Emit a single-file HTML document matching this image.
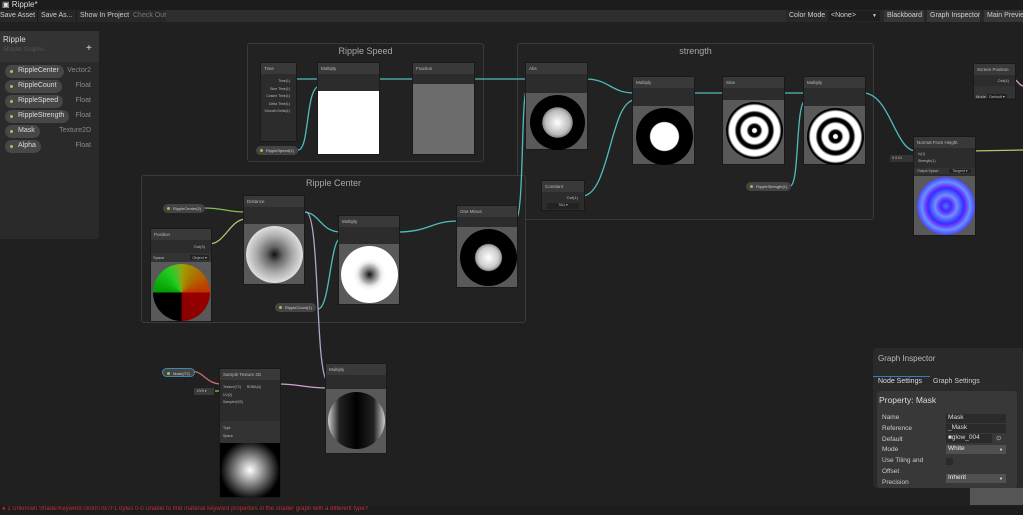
<!DOCTYPE html>
<html><head><meta charset="utf-8"><style>
*{margin:0;padding:0;box-sizing:border-box}
body{width:1023px;height:515px;background:#202020;position:relative;overflow:hidden;font-family:"Liberation Sans",sans-serif;color:#c4c4c4}
.a{position:absolute;white-space:nowrap}
.grp{position:absolute;border:1px solid #3a3a3a;border-radius:3px;background:#222}
.gt{position:absolute;left:0;right:0;top:2px;text-align:center;font-size:9px;color:#a8a8a8}
.n{position:absolute;background:#2c2c2c;border:1px solid #1a1a1a;font-size:4px;color:#bbb;white-space:nowrap}
.n .h{height:11px;background:#393939;padding:3px 3px;font-size:4.5px}
.pv{position:absolute;left:0;right:0;background:#595959}
.c{position:absolute;border-radius:50%}
.pill{position:absolute;height:9px;background:#444;border-radius:5px;font-size:4px;color:#ccc;padding:2px 4px 0 10px;white-space:nowrap}
.pill:before{content:"";position:absolute;left:4px;top:3px;width:3px;height:3px;background:#8c4;border-radius:50%}
.bp{position:absolute;left:5px;height:13px;background:#474747;border-radius:7px;padding:2px 5px 0 13px;font-size:7px;color:#ddd;white-space:nowrap}
.bp:before{content:"";position:absolute;left:5px;top:5px;width:3px;height:3px;background:#9c5;border-radius:50%}
.bt{position:absolute;right:932px;font-size:7px;color:#8a8a8a;white-space:nowrap}
.tb{position:absolute;top:10px;height:12px;font-size:7px;color:#d0d0d0;padding:2px 3px 0;white-space:nowrap;overflow:hidden}
</style></head><body>
<div class="a" style="left:0;top:0;width:1023px;height:10px;background:#1c1c1c;font-size:8px;color:#ddd;padding-left:2px">▣ Ripple*</div>
<div class="a" style="left:0;top:10px;width:1023px;height:12px;background:#282828"></div>
<div class="tb" style="left:-3px;width:40px">Save Asset</div>
<div class="tb" style="left:37px;width:38px;border-left:1px solid #1a1a1a">Save As...</div>
<div class="tb" style="left:76px;width:54px;border-left:1px solid #1a1a1a">Show In Project</div>
<div class="tb" style="left:130px;width:36px;color:#777">Check Out</div>
<div class="a" style="left:166px;top:10px;width:620px;height:12px;background:#2e2e2e"></div>
<div class="tb" style="left:786px;width:42px">Color Mode</div>
<div class="tb" style="left:828px;width:52px;background:#1e1e1e;top:11px;height:10px;padding-top:1px">&lt;None&gt;<span style="position:absolute;right:3px;top:2px;font-size:5px">▼</span></div>
<div class="tb" style="left:884px;width:40px;background:#363636">Blackboard</div>
<div class="tb" style="left:927px;width:53px;background:#363636">Graph Inspector</div>
<div class="tb" style="left:984px;width:45px;background:#363636">Main Preview</div>

<div class="grp" style="left:247px;top:43px;width:237px;height:119px"><div class="gt">Ripple Speed</div></div>
<div class="grp" style="left:517px;top:43px;width:357px;height:177px"><div class="gt">strength</div></div>
<div class="grp" style="left:141px;top:175px;width:385px;height:148px"><div class="gt">Ripple Center</div></div>

<svg class="a" style="left:0;top:0" width="1023" height="515" fill="none" stroke-width="1.3">
<g stroke="#4fbdbd">
<path d="M293 79 L320 79"/>
<path d="M298 150 C310 150 305 86 320 86"/>
<path d="M378 79 L415 79"/>
<path d="M472 79 L528 79"/>
<path d="M585 79 C610 79 610 93 635 93"/>
<path d="M692 93 L725 93"/>
<path d="M782 93 L806 93"/>
<path d="M863 93 C890 93 895 151 916 151"/>
<path d="M582 196 C610 196 610 100 635 100"/>
<path d="M790 186 C800 186 795 100 806 100"/>
<path d="M303 212 C320 212 320 232 341 232"/>
<path d="M318 309 C330 309 330 238 341 238"/>
<path d="M397 232 C430 232 430 221 459 221"/>
<path d="M515 221 C525 221 520 86 528 86"/>
<path d="M960 158 L965 158"/>
</g>
<path d="M970 151 L1023 150" stroke="#b8c46a"/>
<path d="M203 208 C225 208 225 212 246 212" stroke="#7fbf4f"/>
<path d="M209 244 C225 244 230 219 246 219" stroke="#b8c46a"/>
<path d="M306 212 C320 212 315 370 327 381" stroke="#a9a9c9"/>
<path d="M190 371 C205 371 205 384 222 384" stroke="#d06a6a"/>
<path d="M215 391 L222 391" stroke="#6fcf4f"/>
<path d="M278 384 C300 384 305 388 328 388" stroke="#d6a0d0"/>
<path d="M1012 79 C1018 79 1018 85 1023 86" stroke="#d6a0d0"/>
</svg>

<div class="n" style="left:260px;top:62px;width:37px;height:80px"><div class="h">Time</div>
<div style="text-align:right;padding:4px 6px 0 0;line-height:7.6px;font-size:3.5px">Time(1)<br>Sine Time(1)<br>Cosine Time(1)<br>Delta Time(1)<br>Smooth Delta(1)</div></div>
<div class="n" style="left:317px;top:62px;width:63px;height:93px"><div class="h">Multiply</div>
<div class="pv" style="top:28px;bottom:0;background:#fff"></div></div>
<div class="n" style="left:412px;top:62px;width:63px;height:93px"><div class="h">Fraction</div>
<div class="pv" style="top:21px;bottom:0;background:#6c6c6c"></div></div>
<div class="n" style="left:525px;top:62px;width:63px;height:88px"><div class="h">Abs</div>
<div class="pv" style="top:30px;bottom:0"><div class="c" style="left:4px;top:2px;width:55px;height:55px;background:radial-gradient(circle at 50% 50%,#fff 0,#bbb 12px,#888 15px,#000 15.5px)"></div></div></div>
<div class="n" style="left:632px;top:76px;width:63px;height:89px"><div class="h">Multiply</div>
<div class="pv" style="top:29px;bottom:0"><div class="c" style="left:3px;top:2px;width:57px;height:57px;background:radial-gradient(circle,#fff 14px,#000 15px)"></div></div></div>
<div class="n" style="left:722px;top:76px;width:63px;height:89px"><div class="h">Sine</div>
<div class="pv" style="top:23px;bottom:0"><div class="c" style="left:3px;top:2px;width:57px;height:57px;background:radial-gradient(circle,#fff 2px,#000 3px,#000 6px,#fff 8px,#fff 13px,#000 15px,#000 18px,#fff 20px,#fff 25px,#000 27px)"></div></div></div>
<div class="n" style="left:803px;top:76px;width:63px;height:89px"><div class="h">Multiply</div>
<div class="pv" style="top:29px;bottom:0"><div class="c" style="left:3px;top:2px;width:57px;height:57px;background:radial-gradient(circle,#fff 2px,#000 3px,#000 6px,#fff 8px,#fff 13px,#000 15px,#000 18px,#fff 20px,#fff 25px,#000 27px)"></div></div></div>
<div class="n" style="left:973px;top:63px;width:43px;height:37px"><div class="h">Screen Position</div>
<div style="text-align:right;padding:3px 6px 0 0">Out(4)</div><div style="padding:8px 2px 0;background:#333;margin-top:3px;height:12px">Mode <span style="background:#222;padding:0 2px">Default ▾</span></div></div>
<div class="n" style="left:913px;top:136px;width:63px;height:100px"><div class="h">Normal From Height</div>
<div style="padding:3px 4px;line-height:7px;font-size:3.5px">In(1)<br>Strength(1)</div>
<div style="padding:1px 3px;font-size:3.5px;background:#333">Output Space <span style="background:#222;padding:0 3px;margin-left:10px">Tangent ▾</span></div>
<div class="pv" style="top:39px;bottom:0"><div class="c" style="left:3px;top:1px;width:58px;height:58px;background:repeating-radial-gradient(circle,#6a6aff 0,#3030ff 5px,#8040ff 8px,#50a0ff 11px,#6a6aff 13px)"></div></div></div>
<div class="a" style="left:890px;top:155px;width:23px;height:7px;background:#333;font-size:3.5px;padding:1px 2px">X 0.01</div>
<div class="n" style="left:541px;top:180px;width:44px;height:31px"><div class="h">Constant</div>
<div style="text-align:right;padding:3px 6px 0 0">Out(1)</div><div style="margin:3px 5px;background:#222;height:6px;text-align:center;font-size:3.5px">TAU ▾</div></div>
<div class="n" style="left:243px;top:195px;width:62px;height:90px"><div class="h">Distance</div>
<div class="pv" style="top:28px;bottom:0"><div class="c" style="left:2px;top:2px;width:57px;height:57px;background:radial-gradient(circle,#111 0,#666 8px,#aaa 18px,#ddd 28px)"></div></div></div>
<div class="n" style="left:150px;top:228px;width:62px;height:94px"><div class="h">Position</div>
<div style="text-align:right;padding:4px 6px 0 0">Out(3)</div>
<div style="padding:2px 2px;background:#333;margin-top:4px;height:9px">Space <span style="float:right;background:#222;padding:0 2px">Object ▾</span></div>
<div class="pv" style="top:33px;bottom:0"><div class="c" style="left:2px;top:2px;width:57px;height:57px;background:conic-gradient(from 0deg,#a0a000,#c03000 90deg,#900 90deg,#800 180deg,#000 180deg,#000 270deg,#090 270deg,#2c2 330deg,#8a2 360deg)"></div></div></div>
<div class="n" style="left:338px;top:215px;width:62px;height:90px"><div class="h">Multiply</div>
<div class="pv" style="top:28px;bottom:0"><div class="c" style="left:2px;top:2px;width:57px;height:57px;background:radial-gradient(circle,#111 0,#777 5px,#eee 12px,#fff 16px)"></div></div></div>
<div class="n" style="left:456px;top:205px;width:62px;height:83px"><div class="h">One Minus</div>
<div class="pv" style="top:21px;bottom:0"><div class="c" style="left:3px;top:2px;width:57px;height:57px;background:radial-gradient(circle,#fff 0,#ccc 10px,#999 13px,#000 14px)"></div></div></div>
<div class="n" style="left:219px;top:368px;width:62px;height:130px"><div class="h">Sample Texture 2D</div>
<div style="padding:4px 3px;line-height:7.5px;font-size:3.5px">Texture(T2)&nbsp;&nbsp;&nbsp;&nbsp;&nbsp;&nbsp;RGBA(4)<br>UV(2)<br>Sampler(SS)</div>
<div style="position:absolute;top:52px;left:0;right:0;height:22px;background:#333;padding:3px;font-size:3.5px;line-height:8px">Type<br>Space</div>
<div class="pv" style="top:74px;bottom:0;background:radial-gradient(circle at 50% 50%,#fff 0,#bbb 8px,#444 22px,#000 30px)"></div></div>
<div class="n" style="left:325px;top:363px;width:62px;height:91px"><div class="h">Multiply</div>
<div class="pv" style="top:25px;bottom:0"><div class="c" style="left:2px;top:3px;width:57px;height:57px;background:linear-gradient(90deg,#ccc,#222 20%,#000 50%,#222 80%,#ccc)"></div></div></div>

<div class="pill" style="left:256px;top:146px">RippleSpeed(1)</div>
<div class="pill" style="left:163px;top:204px">RippleCenter(2)</div>
<div class="pill" style="left:275px;top:303px">RippleCount(1)</div>
<div class="pill" style="left:746px;top:182px">RippleStrength(1)</div>
<div class="pill" style="left:162px;top:368px;border:1px solid #3a8ab0">Mask(T2)</div>
<div class="a" style="left:194px;top:388px;width:20px;height:7px;background:#3a3a3a;font-size:3.5px;padding:1px 3px">UV0 ▾</div>

<div class="a" style="left:0;top:31px;width:99px;height:208px;background:#2a2a2a;border-radius:0 4px 4px 0"></div>
<div class="a" style="left:0;top:31px;width:99px;height:31px;background:#333"></div>
<div class="a" style="left:3px;top:35px;font-size:8px;color:#ddd">Ripple</div>
<div class="a" style="left:3px;top:47px;font-size:6px;color:#555">Shader Graphs</div>
<div class="a" style="left:86px;top:43px;font-size:10px;color:#ddd">+</div>
<div class="bp" style="top:65px">RippleCenter</div><div class="bt" style="top:67px">Vector2</div>
<div class="bp" style="top:80px">RippleCount</div><div class="bt" style="top:82px">Float</div>
<div class="bp" style="top:95px">RippleSpeed</div><div class="bt" style="top:97px">Float</div>
<div class="bp" style="top:110px">RippleStrength</div><div class="bt" style="top:112px">Float</div>
<div class="bp" style="top:125px">Mask</div><div class="bt" style="top:127px">Texture2D</div>
<div class="bp" style="top:140px">Alpha</div><div class="bt" style="top:142px">Float</div>

<div class="a" style="left:873px;top:348px;width:150px;height:140px;background:#2a2a2a;border-radius:4px 0 0 4px"></div>
<div class="a" style="left:878px;top:354px;font-size:8px;color:#bbb">Graph Inspector</div>
<div class="a" style="left:873px;top:376px;width:57px;height:1px;background:#3a78c0"></div>
<div class="a" style="left:878px;top:378px;font-size:7px;color:#ddd">Node Settings</div>
<div class="a" style="left:933px;top:378px;font-size:7px;color:#ccc">Graph Settings</div>
<div class="a" style="left:877px;top:391px;width:140px;height:97px;background:#383838;border-radius:3px"></div>
<div class="a" style="left:879px;top:395px;font-size:8.5px;color:#ddd">Property: Mask</div>
<div class="a" style="left:882px;top:413px;font-size:6.5px;line-height:10.8px;color:#ccc">Name<br>Reference<br>Default<br>Mode<br>Use Tiling and<br><span style="line-height:7px">Offset</span><br>Precision</div>
<div class="a" style="left:946px;top:414px;width:60px;height:9px;background:#2a2a2a;font-size:6.5px;color:#ddd;padding-left:2px">Mask</div>
<div class="a" style="left:946px;top:424px;width:60px;height:9px;background:#2a2a2a;font-size:6.5px;color:#ddd;padding-left:2px">_Mask</div>
<div class="a" style="left:946px;top:434px;width:46px;height:9px;background:#2a2a2a;font-size:6.5px;color:#ddd;padding-left:2px">■glow_004</div>
<div class="a" style="left:996px;top:434px;font-size:6.5px">⊙</div>
<div class="a" style="left:946px;top:445px;width:60px;height:9px;background:#505050;font-size:6.5px;color:#eee;padding-left:2px">White<span style="position:absolute;right:3px;top:2px;font-size:4px">▼</span></div>
<div class="a" style="left:946px;top:458px;width:7px;height:7px;background:#2a2a2a"></div>
<div class="a" style="left:946px;top:474px;width:60px;height:9px;background:#505050;font-size:6.5px;color:#eee;padding-left:2px">Inherit<span style="position:absolute;right:3px;top:2px;font-size:4px">▼</span></div>
<div class="a" style="left:970px;top:488px;width:53px;height:17px;background:#555"></div>

<div class="a" style="left:0;top:506px;width:1023px;height:9px;background:#1c1c1c;font-size:6px;color:#c03030;padding-left:2px;overflow:hidden">● 1 Unknown ShaderKeyword 0x0007B7F1 bytes 0-0 Unable to find material keyword properties in the shader graph with a different type?</div>
</body></html>
